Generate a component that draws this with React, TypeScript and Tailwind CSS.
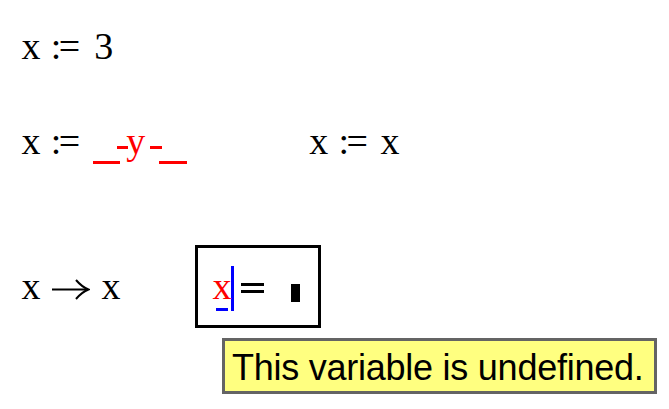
export default function App() {
  const Assign = () => (
    <span>
      <span className="tracking-[-2.6px]">:</span>=
    </span>
  );
  return (
    <div className="relative w-[669px] h-[409px] overflow-hidden bg-white text-black font-['Liberation_Serif',serif] text-[38px] leading-[44px]">
      {/* row 1 */}
      <div className="flex h-[44px] mt-[24px] pl-[21.5px]">
        <span>x</span>
        <span className="ml-[10.3px]"><Assign /></span>
        <span className="ml-[14px]">3</span>
      </div>

      {/* row 2 */}
      <div className="flex h-[44px] mt-[51px] pl-[21.5px] items-start">
        <span>x</span>
        <span className="ml-[10.3px]"><Assign /></span>
        <span className="ml-[12.6px] flex items-start text-[#ff0000]">
          <span className="mt-[42px] w-[27px] h-[3px] bg-[#ff0000]" />
          <span className="ml-[-3px] mt-[27px] w-[11px] h-[3px] bg-[#ff0000]" />
          <span className="ml-[-1.5px]">y</span>
          <span className="ml-[4.5px] mt-[27px] w-[12px] h-[3px] bg-[#ff0000]" />
          <span className="ml-[-3px] mt-[42px] w-[28px] h-[3px] bg-[#ff0000]" />
        </span>
        <span className="ml-[122.5px]">x</span>
        <span className="ml-[10.3px]"><Assign /></span>
        <span className="ml-[12.6px]">x</span>
      </div>

      {/* row 3 */}
      <div className="flex mt-[82px] pl-[21.5px] items-start">
        <div className="flex h-[44px] mt-[19px] items-start">
          <span>x</span>
          <svg className="ml-[11.5px] mt-[15px]" width="38" height="22" viewBox="0 0 38 22">
            <path d="M0 10.5 H36" stroke="#000" strokeWidth="2" fill="none" />
            <path d="M24 1 Q30 8 36.5 10.5 Q30 13 24 20" stroke="#000" strokeWidth="2" fill="none" />
          </svg>
          <span className="ml-[11.5px]">x</span>
        </div>
        <div className="ml-[74.5px] w-[126px] h-[83px] border-[3px] border-black flex items-start pl-[14.5px]">
          <span className="relative mt-[16px] text-[#ff0000]">
            x
            <span className="absolute left-[3.5px] top-[44px] w-[12px] h-[3px] bg-[#0000ff]" />
          </span>
          <span className="ml-[-0.5px] mt-[18px] w-[3px] h-[45px] bg-[#0000ff]" />
          <span className="ml-[7px] mt-[35px] flex flex-col gap-[4px]">
            <span className="w-[23px] h-[3px] bg-black" />
            <span className="w-[23px] h-[3px] bg-black" />
          </span>
          <span className="ml-[27px] mt-[36px] w-[9px] h-[18px] bg-black" />
        </div>
      </div>

      {/* tooltip */}
      <div className="absolute left-[222px] top-[338px] w-[435px] h-[56px] border-[3px] border-[#646464] bg-[#ffff80] pl-[7px] pt-[6.5px] font-['Liberation_Sans',sans-serif] text-[36px] leading-[40px] tracking-[-0.25px] whitespace-nowrap">
        This variable is undefined.
      </div>
    </div>
  );
}
